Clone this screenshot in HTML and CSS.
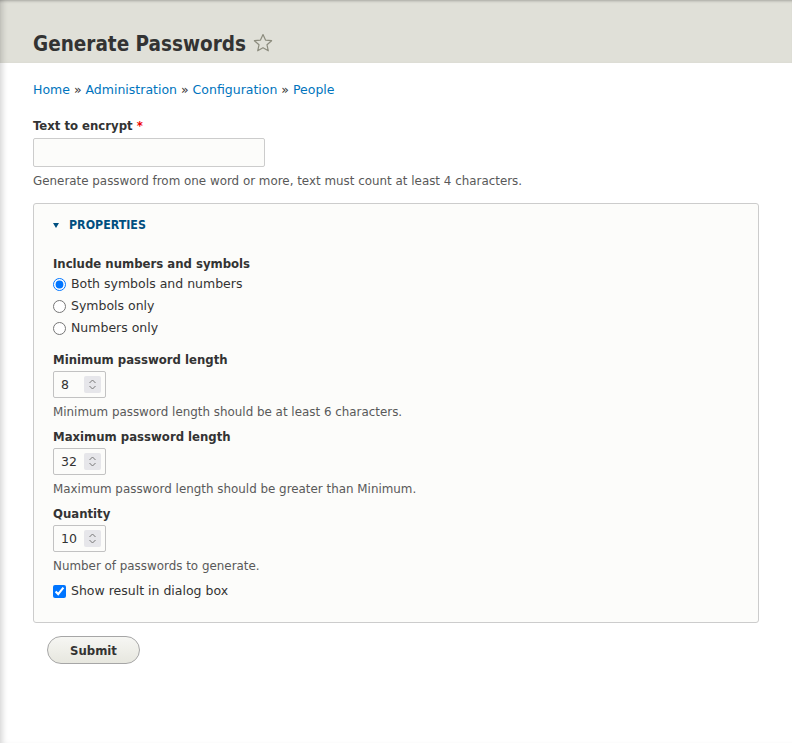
FILE: index.html
```html
<!DOCTYPE html>
<html lang="en">

<head>
    <meta charset="UTF-8">
    <title>Generate Passwords</title>
    <link rel="stylesheet" href="styles.css">
</head>

<body>
    <div class="page">
        <header class="page-header">
            <h1 class="page-title">Generate Passwords</h1>
            <svg class="shortcut-star" width="20" height="20" viewBox="0 0 20 20">
                <path d="M10 1.5l2.5 5.6 6.1.6-4.6 4.1 1.3 6-5.3-3.1-5.3 3.1 1.3-6L1.4 7.7l6.1-.6z"
                    fill="none" stroke="#8c8c7e" stroke-width="1.2" stroke-linejoin="round" />
            </svg>
        </header>

        <main class="content">
            <nav class="breadcrumb">
                <a href="#">Home</a> » <a href="#">Administration</a> » <a href="#">Configuration</a> » <a
                    href="#">People</a>
            </nav>

            <form class="generate-form">
                <div class="form-item form-item--text">
                    <label class="form-label" for="edit-text">Text to encrypt <span class="form-required">*</span></label>
                    <input class="form-text" type="text" id="edit-text">
                    <div class="description">Generate password from one word or more, text must count at least 4 characters.</div>
                </div>

                <details class="details" open>
                    <summary class="details-summary">Properties</summary>
                    <div class="details-wrapper">
                        <fieldset class="radios">
                            <legend class="form-label">Include numbers and symbols</legend>
                            <label class="option"><input type="radio" name="include" checked> Both symbols and numbers</label>
                            <label class="option"><input type="radio" name="include"> Symbols only</label>
                            <label class="option"><input type="radio" name="include"> Numbers only</label>
                        </fieldset>

                        <div class="form-item">
                            <label class="form-label">Minimum password length</label>
                            <div class="number-field">
                                <input class="form-number" type="number" value="8">
                                <span class="spinner"></span>
                            </div>
                            <div class="description">Minimum password length should be at least 6 characters.</div>
                        </div>

                        <div class="form-item">
                            <label class="form-label">Maximum password length</label>
                            <div class="number-field">
                                <input class="form-number" type="number" value="32">
                                <span class="spinner"></span>
                            </div>
                            <div class="description">Maximum password length should be greater than Minimum.</div>
                        </div>

                        <div class="form-item">
                            <label class="form-label">Quantity</label>
                            <div class="number-field">
                                <input class="form-number" type="number" value="10">
                                <span class="spinner"></span>
                            </div>
                            <div class="description">Number of passwords to generate.</div>
                        </div>

                        <label class="option checkbox"><input type="checkbox" checked> Show result in dialog box</label>
                    </div>
                </details>

                <div class="form-actions">
                    <button class="button" type="button">Submit</button>
                </div>
            </form>
        </main>
    </div>
</body>

</html>
```

FILE: styles.css
```css
body {
    margin: 0;
    background: #fff;
    color: #333;
    font: 12.5px/20px "DejaVu Sans", sans-serif;
}

.page {
    min-height: 743px;
    box-shadow: inset 6px 0 6px -4px rgba(0, 0, 0, 0.18);
}

/* bold text is the narrow cut */
.page-title,
.form-label,
.details-summary,
.button {
    font-family: "DejaVu Sans Condensed", "DejaVu Sans", sans-serif;
    font-stretch: semi-condensed;
    font-weight: bold;
}

/* header band */

.page-header {
    display: flex;
    align-items: flex-start;
    gap: 8px;
    height: 63px;
    box-sizing: border-box;
    padding: 30px 33px 0;
    background: #e0e0d8;
    box-shadow: inset 0 3px 3px -2px rgba(0, 0, 0, 0.25), inset 6px 0 6px -4px rgba(0, 0, 0, 0.18);
}

.page-title {
    margin: 0;
    font-size: 20.5px;
    line-height: 28px;
    color: #333;
}

.shortcut-star {
    margin-top: 3px;
    margin-left: -1px;
}

.content {
    padding: 17px 33px 0;
}

.breadcrumb {
    margin-bottom: 16px;
}

.breadcrumb a {
    color: #0074bd;
    text-decoration: none;
}

/* form items */

.form-item {
    margin-bottom: 8px;
}

.form-label {
    display: block;
    padding: 0;
    font-size: 13px;
    line-height: 20px;
    color: #333;
}

.form-required {
    color: #e00;
}

.form-text {
    display: block;
    box-sizing: border-box;
    width: 232px;
    height: 29px;
    margin: 2px 0 7px;
    border: 1px solid #ccc;
    border-radius: 2px;
    background: #fcfcfa;
    font: inherit;
}

.number-field {
    position: relative;
    width: 53px;
    margin: 1px 0 7px;
}

.form-number {
    display: block;
    box-sizing: border-box;
    width: 53px;
    height: 27px;
    margin: 0;
    padding: 0 6px 0 7px;
    border: 1px solid #c2c2c2;
    border-radius: 2px;
    background: #fcfcfa;
    color: #333;
    font: 12.5px "DejaVu Sans", sans-serif;
    -moz-appearance: textfield;
}

.form-number::-webkit-inner-spin-button,
.form-number::-webkit-outer-spin-button {
    -webkit-appearance: none;
    margin: 0;
}

/* fake spin buttons, drawn over the right end of the field */
.spinner {
    position: absolute;
    top: 5px;
    right: 5px;
    width: 17px;
    height: 17px;
    border-radius: 2px;
    background: #e6e6ea url("data:image/svg+xml,%3Csvg xmlns='http://www.w3.org/2000/svg' width='17' height='17'%3E%3Cpath d='M5.5 7l3-3 3 3M5.5 10l3 3 3-3' fill='none' stroke='%23777' stroke-width='1'/%3E%3C/svg%3E") no-repeat;
}

.description {
    font-size: 11.9px;
    line-height: 14px;
    color: #595959;
}

.form-item--text {
    margin-bottom: 15px;
}

/* details */

.details {
    border: 1px solid #ccc;
    border-radius: 3px;
    background: #fcfcfa;
}

.details-summary {
    display: block;
    padding: 11px 19px 10px;
    color: #004f80;
    font-size: 12.3px;
    text-transform: uppercase;
    list-style: none;
    cursor: pointer;
}

.details-summary::-webkit-details-marker {
    display: none;
}

.details-summary::before {
    content: "";
    display: inline-block;
    margin: 0 10px 1px 0;
    border-top: 5px solid #004f80;
    border-left: 3px solid transparent;
    border-right: 3px solid transparent;
    vertical-align: middle;
}

.details-wrapper {
    padding: 10px 19px 20px;
}

.radios {
    margin: 0 0 11px;
    padding: 0;
    border: 0;
}

.radios legend {
    padding: 0;
    line-height: 18px;
}

.option {
    display: flex;
    align-items: center;
    gap: 5px;
    height: 22px;
}

.option input {
    margin: 0;
}

.checkbox {
    margin-top: -1px;
}

/* actions */

.form-actions {
    padding: 13px 0 0 14px;
}

.button {
    width: 93px;
    height: 28px;
    border: 1px solid #a6a6a6;
    border-radius: 20px;
    background: linear-gradient(#f6f6f3, #e7e7df);
    color: #333;
    font-size: 13px;
}
```
